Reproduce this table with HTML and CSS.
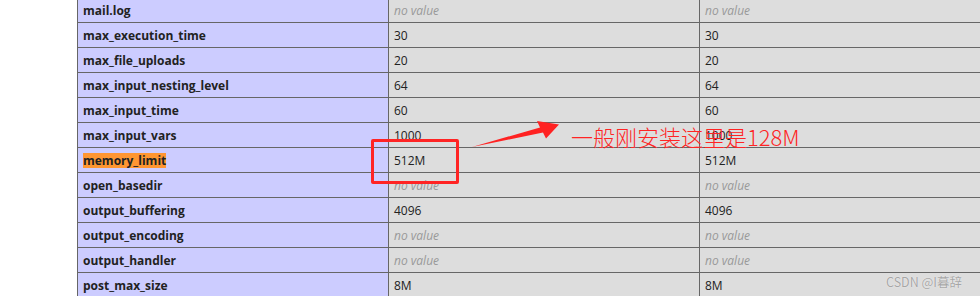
FILE: index.html
```html
<!DOCTYPE html>
<html lang="zh">
<head>
<meta charset="utf-8">
<title>phpinfo</title>
<link rel="stylesheet" href="styles.css">
</head>
<body>
<div class="page">
  <div class="grid">
    <div class="e">mail.log</div><div class="v"><i>no value</i></div><div class="v"><i>no value</i></div>
    <div class="e">max_execution_time</div><div class="v">30</div><div class="v">30</div>
    <div class="e">max_file_uploads</div><div class="v">20</div><div class="v">20</div>
    <div class="e">max_input_nesting_level</div><div class="v">64</div><div class="v">64</div>
    <div class="e">max_input_time</div><div class="v">60</div><div class="v">60</div>
    <div class="e">max_input_vars</div><div class="v">1000</div><div class="v">1000</div>
    <div class="e"><span class="hl">memory_limit</span></div><div class="v">512M</div><div class="v">512M</div>
    <div class="e">open_basedir</div><div class="v"><i>no value</i></div><div class="v"><i>no value</i></div>
    <div class="e">output_buffering</div><div class="v">4096</div><div class="v">4096</div>
    <div class="e">output_encoding</div><div class="v"><i>no value</i></div><div class="v"><i>no value</i></div>
    <div class="e">output_handler</div><div class="v"><i>no value</i></div><div class="v"><i>no value</i></div>
    <div class="e">post_max_size</div><div class="v">8M</div><div class="v">8M</div>
  </div>
  <div class="box"></div>
  <svg class="arrow" width="980" height="296" viewBox="0 0 980 296">
    <polygon points="472,147 540,127.5 537,121 559,124.5 546,138.5 543,132.5" fill="#ff2222"/>
  </svg>
  <div class="note">一般刚安装这里是128M</div>
  <div class="mark">CSDN @I暮辞</div>
</div>
</body>
</html>
```
FILE: styles.css
```css
html, body {
  margin: 0;
  padding: 0;
  background: #fff;
  overflow: hidden;
}
.page {
  position: relative;
  width: 980px;
  height: 296px;
  overflow: hidden;
  font-family: "Open Sans", "Noto Sans CJK SC", sans-serif;
  font-size: 12px;
  color: #222;
}
.grid {
  display: grid;
  grid-template-columns: 310px 310px 400px;
  grid-auto-rows: 24px;
  gap: 1px;
  background: #666;
  border: 1px solid #666;
  margin: -3px 0 0 77px;
  width: fit-content;
}
.e, .v {
  padding: 1px 5px 0;
  line-height: 23px;
  white-space: nowrap;
}
.e {
  background: #ccf;
  font-weight: bold;
}
.v {
  background: #ddd;
}
.v i {
  color: #999;
}
.hl {
  background: #ff9632;
  display: inline-block;
  line-height: 15px;
}
.box {
  position: absolute;
  left: 371px;
  top: 139px;
  width: 82px;
  height: 39px;
  border: 3px solid #ff2424;
  border-radius: 2px;
}
.arrow {
  position: absolute;
  left: 0;
  top: 0;
}
.note {
  position: absolute;
  left: 571px;
  top: 124px;
  font-family: "Noto Sans CJK SC", sans-serif;
  font-weight: 300;
  font-size: 22px;
  line-height: 24px;
  color: #ff2424;
  white-space: nowrap;
}
.mark {
  position: absolute;
  left: 886px;
  top: 274px;
  font-family: "Noto Sans CJK SC", sans-serif;
  font-size: 12.5px;
  line-height: 16px;
  color: #a6a6a6;
  text-shadow: 0 0 1px #fff;
  white-space: nowrap;
}
```
